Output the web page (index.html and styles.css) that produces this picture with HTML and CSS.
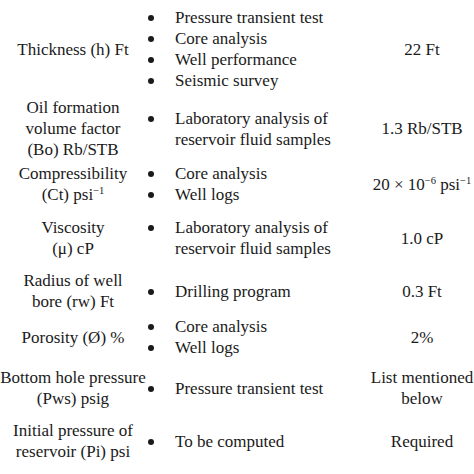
FILE: index.html
```html
<!DOCTYPE html>
<html lang="en">
<head>
<meta charset="utf-8">
<title>Reservoir parameters</title>
<link rel="stylesheet" href="styles.css">
</head>
<body>
<div class="table">
  <div class="row">
    <div class="label">Thickness (h) Ft</div>
    <ul class="sources">
      <li>Pressure transient test</li>
      <li>Core analysis</li>
      <li>Well performance</li>
      <li>Seismic survey</li>
    </ul>
    <div class="value">22 Ft</div>
  </div>
  <div class="row gap-m">
    <div class="label">Oil formation<br>volume factor<br>(Bo) Rb/STB</div>
    <ul class="sources">
      <li>Laboratory analysis of<br>reservoir fluid samples</li>
    </ul>
    <div class="value">1.3 Rb/STB</div>
  </div>
  <div class="row gap-xs">
    <div class="label">Compressibility<br>(Ct) psi<sup>−1</sup></div>
    <ul class="sources">
      <li>Core analysis</li>
      <li>Well logs</li>
    </ul>
    <div class="value">20 × 10<sup>−6</sup> psi<sup>−1</sup></div>
  </div>
  <div class="row gap-xl">
    <div class="label">Viscosity<br>(μ) cP</div>
    <ul class="sources">
      <li>Laboratory analysis of<br>reservoir fluid samples</li>
    </ul>
    <div class="value">1.0 cP</div>
  </div>
  <div class="row gap-l">
    <div class="label">Radius of well<br>bore (rw) Ft</div>
    <ul class="sources">
      <li>Drilling program</li>
    </ul>
    <div class="value">0.3 Ft</div>
  </div>
  <div class="row gap-s">
    <div class="label">Porosity (Ø) %</div>
    <ul class="sources">
      <li>Core analysis</li>
      <li>Well logs</li>
    </ul>
    <div class="value">2%</div>
  </div>
  <div class="row gap-m">
    <div class="label">Bottom hole pressure<br>(Pws) psig</div>
    <ul class="sources">
      <li>Pressure transient test</li>
    </ul>
    <div class="value">List mentioned<br>below</div>
  </div>
  <div class="row gap-l">
    <div class="label">Initial pressure of<br>reservoir (Pi) psi</div>
    <ul class="sources">
      <li>To be computed</li>
    </ul>
    <div class="value">Required</div>
  </div>
</div>
</body>
</html>
```

FILE: styles.css
```css
html, body {
  margin: 0;
  padding: 0;
  background: #ffffff;
}

body {
  width: 474px;
  height: 474px;
  overflow: hidden;
  font-family: "Liberation Serif", "Times New Roman", serif;
  font-size: 17px;
  line-height: 21px;
  color: #1a1a1a;
}

.table {
  display: flex;
  flex-direction: column;
  padding-top: 7px;
}

.row {
  display: grid;
  grid-template-columns: 146px 224px 104px;
  align-items: center;
}

.gap-xs { margin-top: 3px; }
.gap-s { margin-top: 4px; }
.gap-m { margin-top: 6px; }
.gap-l { margin-top: 11px; }
.gap-xl { margin-top: 12px; }

.row:nth-child(7) { margin-top: 9px; }

.label,
.value {
  text-align: center;
  white-space: nowrap;
}

.sources {
  list-style: none;
  margin: 0;
  padding: 0;
}

.sources li {
  position: relative;
  padding-left: 29px;
  white-space: nowrap;
}

.sources li::before {
  content: "";
  position: absolute;
  left: 2px;
  top: 8px;
  width: 6px;
  height: 6px;
  border-radius: 50%;
  background: #1a1a1a;
}

sup {
  font-size: 0.62em;
  line-height: 0;
  vertical-align: 0.55em;
}
```
